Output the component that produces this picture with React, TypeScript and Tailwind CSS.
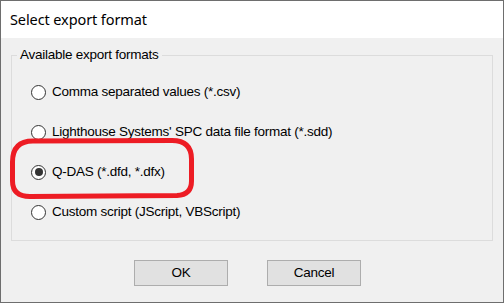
import { useState } from "react";

const formats = [
  { id: "csv", label: "Comma separated values (*.csv)" },
  { id: "sdd", label: "Lighthouse Systems' SPC data file format (*.sdd)" },
  { id: "qdas", label: "Q-DAS (*.dfd, *.dfx)" },
  { id: "script", label: "Custom script (JScript, VBScript)" },
];

function Radio({ checked }: { checked: boolean }) {
  return (
    <span className="flex h-[15px] w-[15px] shrink-0 items-center justify-center rounded-full border border-[#333333] bg-white">
      {checked && <span className="h-[8px] w-[8px] rounded-full bg-[#333333]" />}
    </span>
  );
}

export default function App() {
  const [selected, setSelected] = useState("qdas");

  return (
    <div className="relative flex h-[303px] w-[504px] flex-col border border-[#6e6e6e] bg-[#f0f0f0] font-['Liberation_Sans',Arial,sans-serif] text-black">
      <div className="flex h-[37px] shrink-0 items-center bg-white pl-[9px] font-['Noto_Sans',sans-serif] text-[14.5px] tracking-[-0.1px]">
        Select export format
      </div>

      <fieldset className="mx-[10px] mt-[9px] h-[194px] border border-[#dcdcdc] px-0 pb-0">
        <legend className="ml-[5px] px-[3px] text-[13.5px] leading-[16px] tracking-[-0.25px]">
          Available export formats
        </legend>
        <div className="flex flex-col pt-[9px]">
          {formats.map((f) => (
            <label
              key={f.id}
              onClick={() => setSelected(f.id)}
              className="flex h-[40px] cursor-default items-center gap-[6px] pl-[19px] text-[13.5px] tracking-[-0.25px]"
            >
              <Radio checked={selected === f.id} />
              <span>{f.label}</span>
            </label>
          ))}
        </div>
      </fieldset>

      <div className="ml-[133px] mt-[19px] flex gap-[39px]">
        <button className="h-[26px] w-[94px] border border-[#adadad] bg-[#e1e1e1] text-[13.5px] tracking-[-0.25px]">
          OK
        </button>
        <button className="h-[26px] w-[94px] border border-[#adadad] bg-[#e1e1e1] text-[13.5px] tracking-[-0.25px]">
          Cancel
        </button>
      </div>

      {/* red annotation drawn over the dialog */}
      <svg
        className="pointer-events-none absolute left-[-1px] top-[-1px]"
        width="504"
        height="303"
        viewBox="0 0 504 303"
      >
        <path
          d="M 12.5 162 Q 12.5 141 33 141 L 172 140.5 Q 191.5 140.5 191.5 159 L 191.5 181 Q 191.5 195 177 195.5 L 30 196.5 Q 12.5 196.5 12.5 181 Z"
          fill="none"
          stroke="#ed1c24"
          strokeWidth="5"
        />
      </svg>
    </div>
  );
}
